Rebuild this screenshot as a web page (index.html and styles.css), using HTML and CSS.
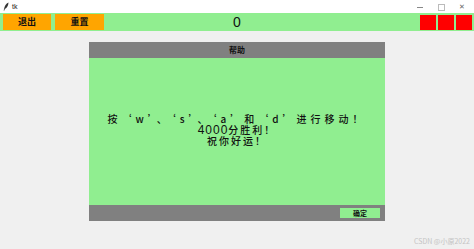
FILE: index.html
```html
<!DOCTYPE html>
<html>
<head>
<meta charset="utf-8">
<link rel="stylesheet" href="styles.css">
</head>
<body>
<div class="app">
  <div class="titlebar">
    <div class="tb-left">
      <svg class="feather" width="6" height="9" viewBox="0 0 6 9"><path d="M5.5 0.5 C3 1.5 1.5 4 1.2 6.5 L0.6 8.6 L1.4 8.6 L1.8 7 C4 6 5.3 3.5 5.5 0.5 Z" fill="#333"/></svg>
      <span class="tk">tk</span>
    </div>
    <div class="tb-right">
      <span class="wc min"></span>
      <span class="wc max"></span>
      <span class="wc close">✕</span>
    </div>
  </div>
  <div class="toolbar">
    <div class="tool-left">
      <div class="btn btn-quit">退出</div>
      <div class="btn btn-reset">重置</div>
    </div>
    <div class="score">0</div>
    <div class="tool-right">
      <div class="life"></div>
      <div class="life"></div>
      <div class="life"></div>
    </div>
  </div>
  <div class="stage">
    <div class="dialog">
      <div class="dlg-head">帮助</div>
      <div class="dlg-body">
        <p class="line-keys">按‘w’、‘s’、‘a’和‘d’进行移动！</p>
        <p><span class="num">4000</span>分胜利！</p>
        <p>祝你好运！</p>
      </div>
      <div class="dlg-foot">
        <div class="ok">确定</div>
      </div>
    </div>
  </div>
  <div class="watermark">CSDN @小原2022</div>
</div>
</body>
</html>
```
FILE: styles.css
```css
html, body {
  margin: 0;
  padding: 0;
}
body {
  width: 474px;
  height: 249px;
  overflow: hidden;
  background: #f0f0f0;
  font-family: "Noto Sans CJK SC", "Noto Sans", sans-serif;
}
.app {
  position: relative;
  width: 474px;
  height: 249px;
}
.titlebar {
  height: 13px;
  background: #ffffff;
  display: flex;
  align-items: center;
  justify-content: space-between;
}
.tb-left {
  display: flex;
  align-items: center;
  padding-left: 3px;
  gap: 3px;
}
.tk {
  font-family: "Liberation Sans", sans-serif;
  font-size: 7px;
  color: #222;
}
.tb-right {
  display: flex;
  align-items: center;
  height: 13px;
  padding-right: 8px;
  gap: 13px;
}
.wc {
  display: block;
  width: 8px;
  height: 8px;
  position: relative;
  font-family: "DejaVu Sans", sans-serif;
  font-size: 7px;
  line-height: 8px;
  color: #666;
  text-align: center;
}
.min::after {
  content: "";
  position: absolute;
  left: 1px;
  right: 1px;
  top: 4px;
  height: 1px;
  background: #888;
}
.max::after {
  content: "";
  position: absolute;
  left: 1px;
  top: 1px;
  width: 5px;
  height: 5px;
  border: 1px solid #bbb;
}
.toolbar {
  height: 18px;
  background: #90ee90;
  display: grid;
  grid-template-columns: 1fr auto 1fr;
  align-items: center;
}
.tool-left {
  display: flex;
  gap: 4px;
  padding-left: 3px;
}
.btn {
  height: 16px;
  background: #ffa500;
  font-size: 9px;
  line-height: 16px;
  text-align: center;
  color: #111;
  font-weight: 700;
}
.btn-quit { width: 48px; }
.btn-reset { width: 49px; }
.score {
  font-family: "Liberation Sans", sans-serif;
  font-size: 14px;
  color: #111;
  line-height: 18px;
}
.tool-right {
  display: flex;
  justify-content: flex-end;
  gap: 2px;
  padding-right: 2px;
}
.life {
  width: 16px;
  height: 15px;
  background: #ff0000;
}
.stage {
  padding-top: 11px;
  padding-left: 89px;
}
.dialog {
  width: 296px;
  display: flex;
  flex-direction: column;
}
.dlg-head {
  height: 16px;
  background: #808080;
  text-align: center;
  font-size: 8px;
  line-height: 16px;
  color: #111;
  font-weight: 700;
}
.dlg-body {
  height: 143px;
  padding-bottom: 4px;
  background: #90ee90;
  display: flex;
  flex-direction: column;
  justify-content: center;
  align-items: center;
}
.dlg-body p {
  margin: 0;
  font-size: 10px;
  line-height: 11px;
  height: 11px;
  color: #111;
  font-weight: 500;
  white-space: nowrap;
  letter-spacing: 2px;
}
.dlg-body p.line-keys {
  letter-spacing: 4px;
}
.num {
  font-family: "Liberation Sans", sans-serif;
  font-size: 12px;
  letter-spacing: 1px;
}
.dlg-foot {
  height: 16px;
  background: #808080;
  display: flex;
  justify-content: flex-end;
  align-items: center;
  padding-right: 5px;
}
.ok {
  width: 40px;
  height: 10px;
  background: #90ee90;
  font-size: 7px;
  line-height: 10px;
  text-align: center;
  color: #111;
  font-weight: 700;
}
.watermark {
  position: absolute;
  right: 4px;
  bottom: 4px;
  font-size: 7px;
  line-height: 8px;
  color: #c4c4c4;
  font-family: "Noto Sans CJK SC", "Noto Sans", sans-serif;
}
```
